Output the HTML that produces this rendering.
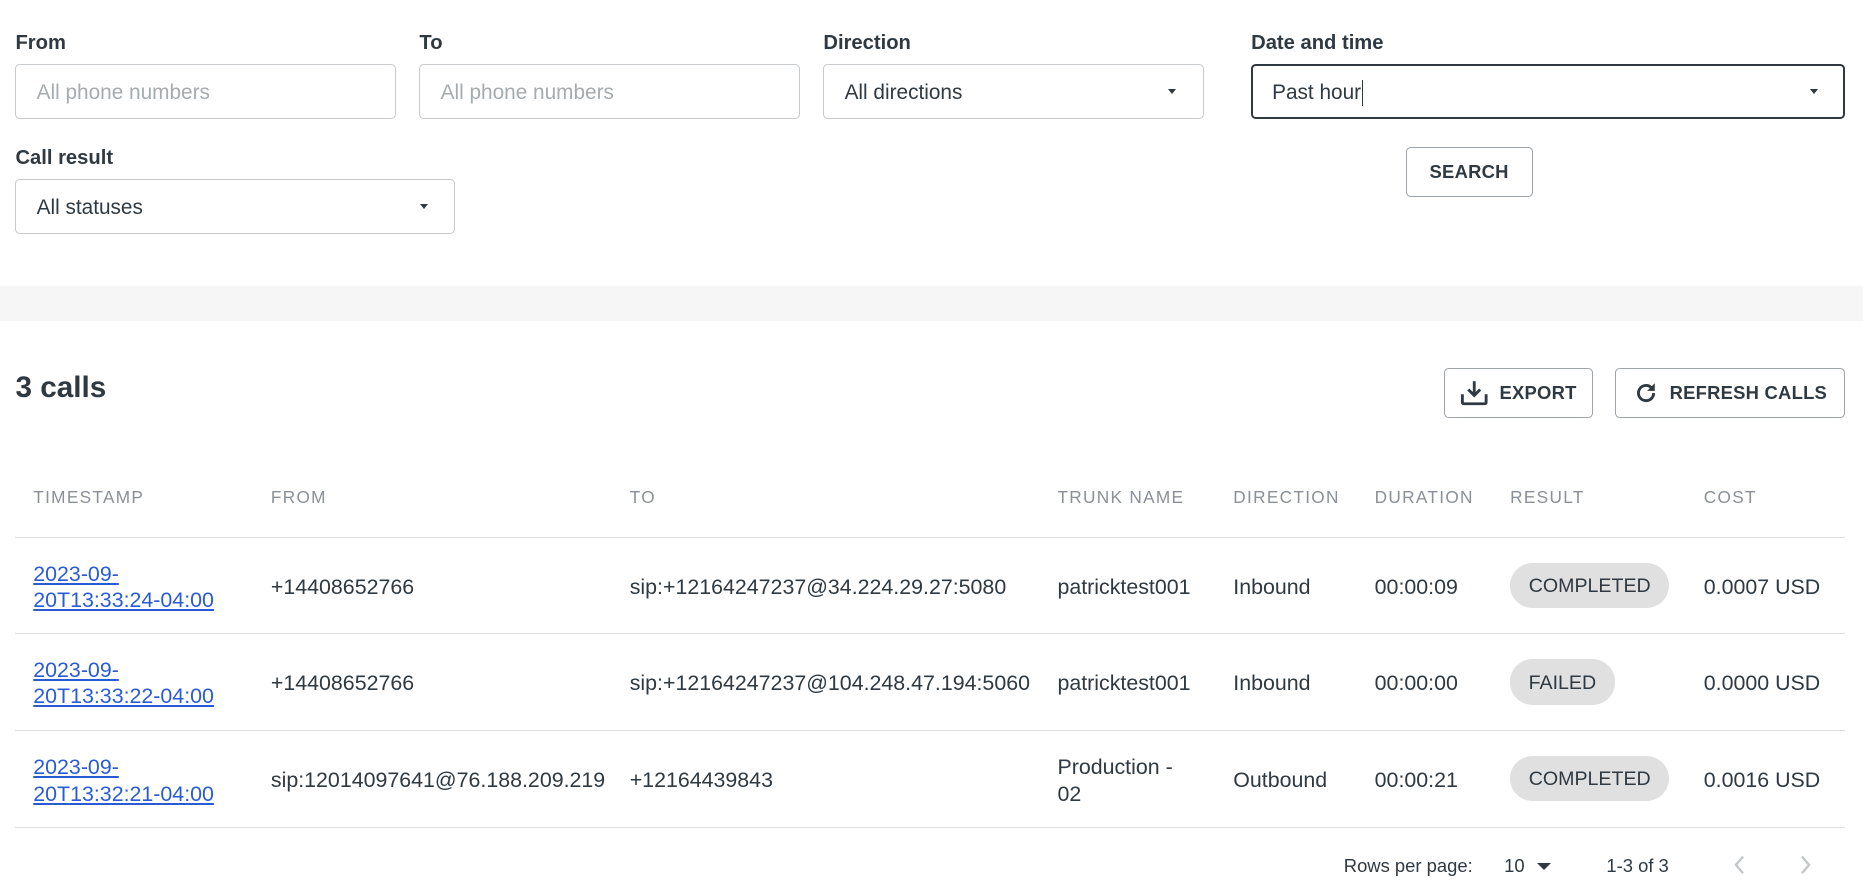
<!DOCTYPE html>
<html><head><meta charset="utf-8"><style>
html{zoom:1.18814}
*{box-sizing:border-box;margin:0;padding:0}
body{width:1568px;height:752px;overflow:hidden;background:#fff;font-family:"Liberation Sans",sans-serif;color:#2f3941;position:relative;font-size:16px}
.a{position:absolute}
.lbl{font-weight:bold;font-size:17px;line-height:20px}
.inp{border:1px solid #c8cbce;border-radius:4px;height:46px;display:flex;align-items:center;padding-left:17px;font-size:17.5px;padding-top:2px}
.ph{color:#a6abaf}
.caret{position:absolute;right:22px;top:20px;width:0;height:0;border-left:4px solid transparent;border-right:4px solid transparent;border-top:5px solid #2f3941}
.btn{border:1px solid #9ea3a8;border-radius:4px;display:flex;align-items:center;justify-content:center;font-weight:bold;font-size:15.5px;letter-spacing:.2px}
.th{font-size:14.5px;color:#8a9096;letter-spacing:1.1px;top:410px}
.line{left:13px;width:1540px;height:1px;background:#e0e0e0}
.c{font-size:18px}
.lnk{color:#2a5bd7;text-decoration:underline;line-height:22px}
.chip{background:#e0e0e0;border-radius:19px;height:38px;display:flex;align-items:center;justify-content:center;font-size:16.5px;padding-top:2px}
</style></head><body>
<div class="a lbl" style="left:13px;top:27px">From</div>
<div class="a lbl" style="left:353px;top:27px">To</div>
<div class="a lbl" style="left:693px;top:27px">Direction</div>
<div class="a lbl" style="left:1053px;top:27px">Date and time</div>
<div class="a inp" style="left:13px;top:54px;width:320px"><span class="ph">All phone numbers</span></div>
<div class="a inp" style="left:353px;top:54px;width:320px"><span class="ph">All phone numbers</span></div>
<div class="a inp" style="left:693px;top:54px;width:320px">All directions<span class="caret"></span></div>
<div class="a inp" style="left:1053px;top:54px;width:500px;border:2px solid #2f3941;padding-left:16px">Past hour<span style="display:inline-block;width:1px;height:22px;background:#2f3941;margin-left:1px"></span><span class="caret" style="right:21px;top:19px"></span></div>
<div class="a lbl" style="left:13px;top:124px">Call result</div>
<div class="a inp" style="left:13px;top:151px;width:370px">All statuses<span class="caret"></span></div>
<div class="a btn" style="left:1183px;top:124px;width:107px;height:42px">SEARCH</div>
<div class="a" style="left:0;top:241px;width:1568px;height:29px;background:#f6f6f6"></div>
<div class="a" style="left:13px;top:312px;font-size:25px;font-weight:bold">3 calls</div>
<div class="a btn" style="left:1215px;top:310px;width:126px;height:42px"><svg width="24" height="22" viewBox="0 0 24 22" style="margin-right:9px"><path d="M12 1v12M7 8l5 5 5-5M2 12v7a1 1 0 0 0 1 1h18a1 1 0 0 0 1-1v-7" fill="none" stroke="#2f3941" stroke-width="2.4"/></svg>EXPORT</div>
<div class="a btn" style="left:1359px;top:310px;width:194px;height:42px"><svg width="22" height="22" viewBox="0 0 24 24" style="margin-right:9px"><path d="M19 12a7 7 0 1 1-2.1-5" fill="none" stroke="#2f3941" stroke-width="2.6"/><path d="M20 3v7h-7z" fill="#2f3941"/></svg>REFRESH CALLS</div>
<div class="a th" style="left:28px">TIMESTAMP</div>
<div class="a th" style="left:228px">FROM</div>
<div class="a th" style="left:530px">TO</div>
<div class="a th" style="left:890px">TRUNK NAME</div>
<div class="a th" style="left:1038px">DIRECTION</div>
<div class="a th" style="left:1157px">DURATION</div>
<div class="a th" style="left:1271px">RESULT</div>
<div class="a th" style="left:1434px">COST</div>
<div class="a line" style="top:452px"></div>
<div class="a line" style="top:533px"></div>
<div class="a line" style="top:614px"></div>
<div class="a line" style="top:696px"></div>

<div class="a c lnk" style="left:28px;top:472px">2023-09-<br>20T13:33:24-04:00</div>
<div class="a c" style="left:228px;top:484px">+14408652766</div>
<div class="a c" style="left:530px;top:484px">sip:+12164247237@34.224.29.27:5080</div>
<div class="a c" style="left:890px;top:484px">patricktest001</div>
<div class="a c" style="left:1038px;top:484px">Inbound</div>
<div class="a c" style="left:1157px;top:484px">00:00:09</div>
<div class="a chip" style="left:1271px;top:474px;width:134px">COMPLETED</div>
<div class="a c" style="left:1434px;top:484px">0.0007 USD</div>

<div class="a c lnk" style="left:28px;top:553px">2023-09-<br>20T13:33:22-04:00</div>
<div class="a c" style="left:228px;top:565px">+14408652766</div>
<div class="a c" style="left:530px;top:565px">sip:+12164247237@104.248.47.194:5060</div>
<div class="a c" style="left:890px;top:565px">patricktest001</div>
<div class="a c" style="left:1038px;top:565px">Inbound</div>
<div class="a c" style="left:1157px;top:565px">00:00:00</div>
<div class="a chip" style="left:1271px;top:555px;width:88px">FAILED</div>
<div class="a c" style="left:1434px;top:565px">0.0000 USD</div>

<div class="a c lnk" style="left:28px;top:635px">2023-09-<br>20T13:32:21-04:00</div>
<div class="a c" style="left:228px;top:646px">sip:12014097641@76.188.209.219</div>
<div class="a c" style="left:530px;top:646px">+12164439843</div>
<div class="a c" style="left:890px;top:635px;line-height:22px">Production -<br>02</div>
<div class="a c" style="left:1038px;top:646px">Outbound</div>
<div class="a c" style="left:1157px;top:646px">00:00:21</div>
<div class="a chip" style="left:1271px;top:636px;width:134px">COMPLETED</div>
<div class="a c" style="left:1434px;top:646px">0.0016 USD</div>

<div class="a" style="left:1131px;top:720px;font-size:15.5px">Rows per page:</div>
<div class="a" style="left:1266px;top:720px;font-size:15.5px">10</div>
<div class="a" style="left:1294px;top:726px;border-left:6px solid transparent;border-right:6px solid transparent;border-top:6px solid #2f3941"></div>
<div class="a" style="left:1352px;top:720px;font-size:15.5px">1-3 of 3</div>
<svg class="a" style="left:1456px;top:718px" width="16" height="20" viewBox="0 0 16 20"><path d="M11 3l-6 7 6 7" fill="none" stroke="#c4c7ca" stroke-width="2"/></svg>
<svg class="a" style="left:1512px;top:718px" width="16" height="20" viewBox="0 0 16 20"><path d="M5 3l6 7-6 7" fill="none" stroke="#c4c7ca" stroke-width="2"/></svg>
</body></html>
